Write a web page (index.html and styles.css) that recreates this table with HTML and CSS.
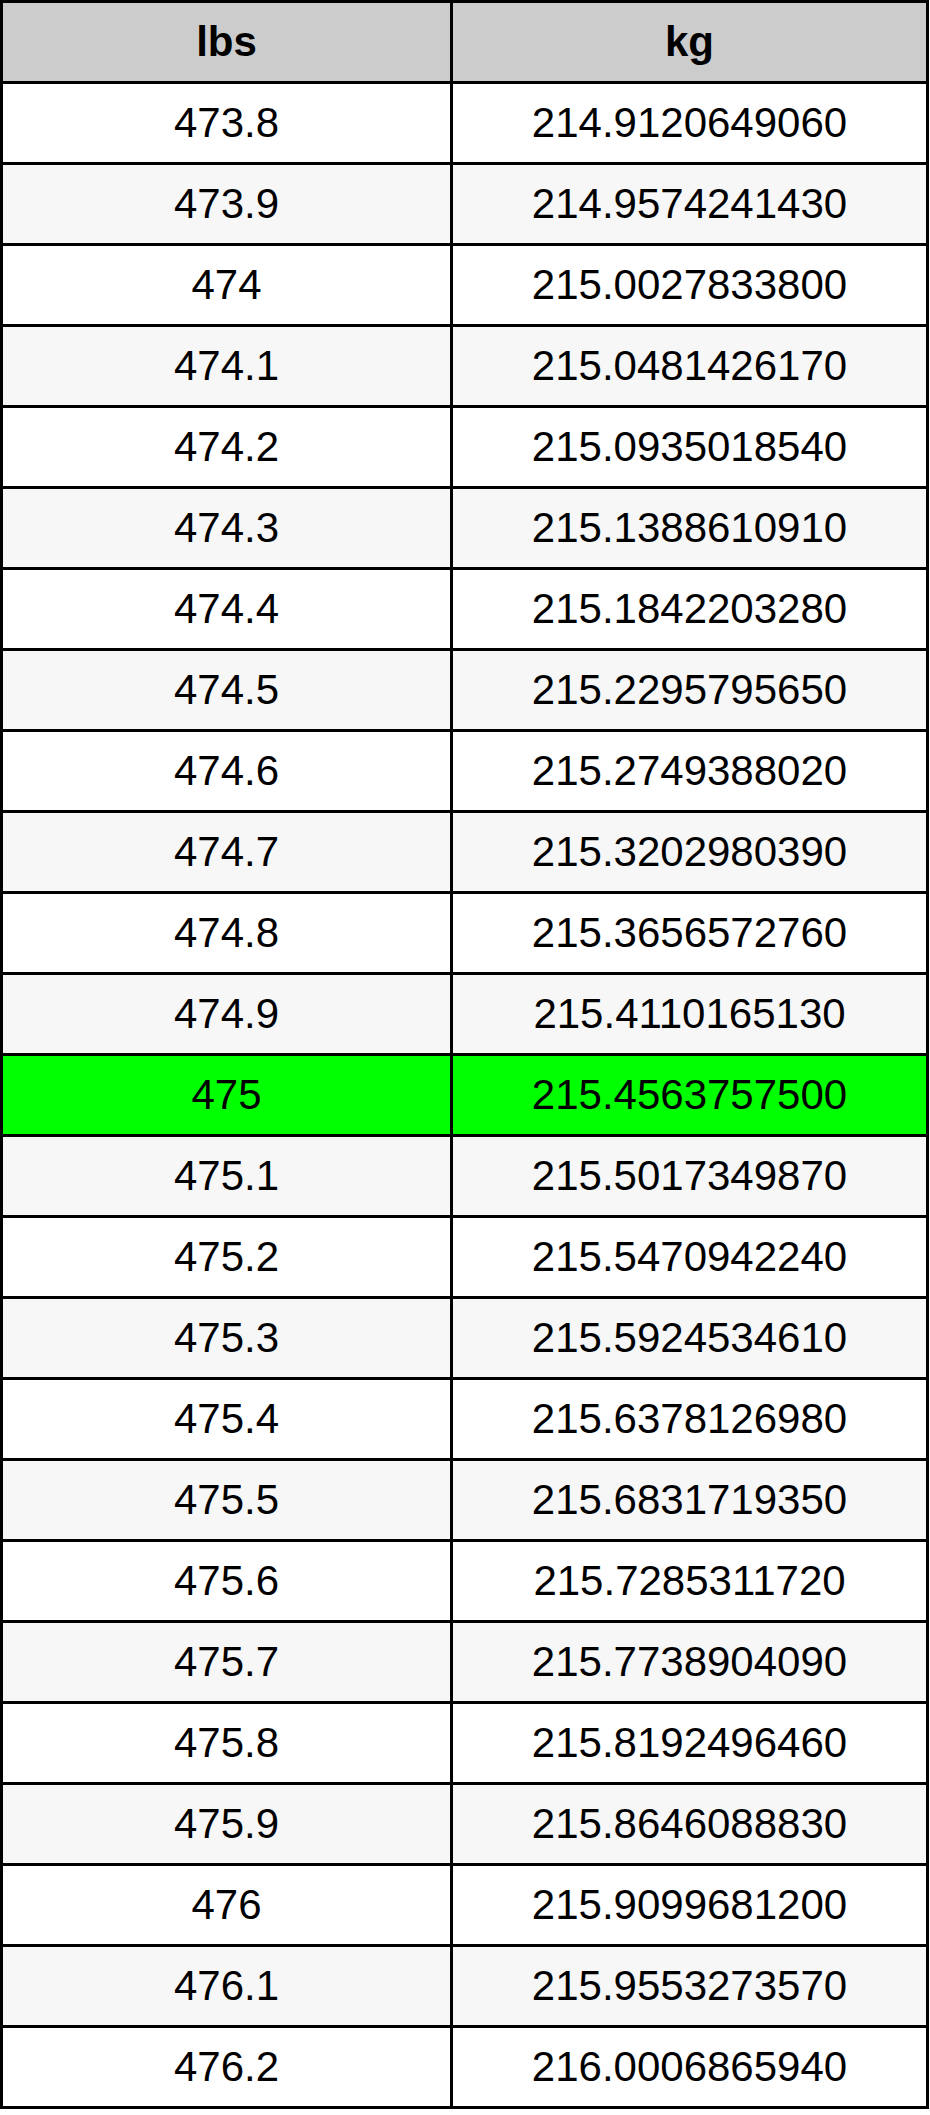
FILE: index.html
```html
<!DOCTYPE html>
<html lang="en">
<head>
<meta charset="utf-8">
<title>lbs to kg</title>
<link rel="stylesheet" href="styles.css">
</head>
<body>
<table class="conv">
  <thead>
    <tr><th>lbs</th><th>kg</th></tr>
  </thead>
  <tbody>
    <tr><td>473.8</td><td>214.9120649060</td></tr>
    <tr class="alt"><td>473.9</td><td>214.9574241430</td></tr>
    <tr><td>474</td><td>215.0027833800</td></tr>
    <tr class="alt"><td>474.1</td><td>215.0481426170</td></tr>
    <tr><td>474.2</td><td>215.0935018540</td></tr>
    <tr class="alt"><td>474.3</td><td>215.1388610910</td></tr>
    <tr><td>474.4</td><td>215.1842203280</td></tr>
    <tr class="alt"><td>474.5</td><td>215.2295795650</td></tr>
    <tr><td>474.6</td><td>215.2749388020</td></tr>
    <tr class="alt"><td>474.7</td><td>215.3202980390</td></tr>
    <tr><td>474.8</td><td>215.3656572760</td></tr>
    <tr class="alt"><td>474.9</td><td>215.4110165130</td></tr>
    <tr class="hit"><td>475</td><td>215.4563757500</td></tr>
    <tr class="alt"><td>475.1</td><td>215.5017349870</td></tr>
    <tr><td>475.2</td><td>215.5470942240</td></tr>
    <tr class="alt"><td>475.3</td><td>215.5924534610</td></tr>
    <tr><td>475.4</td><td>215.6378126980</td></tr>
    <tr class="alt"><td>475.5</td><td>215.6831719350</td></tr>
    <tr><td>475.6</td><td>215.7285311720</td></tr>
    <tr class="alt"><td>475.7</td><td>215.7738904090</td></tr>
    <tr><td>475.8</td><td>215.8192496460</td></tr>
    <tr class="alt"><td>475.9</td><td>215.8646088830</td></tr>
    <tr><td>476</td><td>215.9099681200</td></tr>
    <tr class="alt"><td>476.1</td><td>215.9553273570</td></tr>
    <tr class="last"><td>476.2</td><td>216.0006865940</td></tr>
  </tbody>
</table>
</body>
</html>
```
FILE: styles.css
```css
html, body {
  margin: 0;
  padding: 0;
  background: #ffffff;
}

.conv {
  border-collapse: separate;
  border-spacing: 0;
  table-layout: fixed;
  width: 929px;
  font-family: "Liberation Sans", Arial, sans-serif;
  font-size: 42px;
  color: #000000;
}

.conv th,
.conv td {
  box-sizing: border-box;
  height: 81px;
  padding: 0;
  text-align: center;
  vertical-align: middle;
  border-top: 3px solid #000000;
  border-left: 3px solid #000000;
  line-height: 1;
}

.conv th:first-child,
.conv td:first-child {
  width: 450px;
}

.conv th:last-child,
.conv td:last-child {
  width: 479px;
  border-right: 3px solid #000000;
}

.conv th {
  background: #cccccc;
  font-weight: bold;
}

.conv tr.alt td {
  background: #f7f7f7;
}

.conv tr.hit td {
  background: #00ff00;
}

.conv tr.last td {
  height: 84px;
  border-bottom: 3px solid #000000;
}
```
